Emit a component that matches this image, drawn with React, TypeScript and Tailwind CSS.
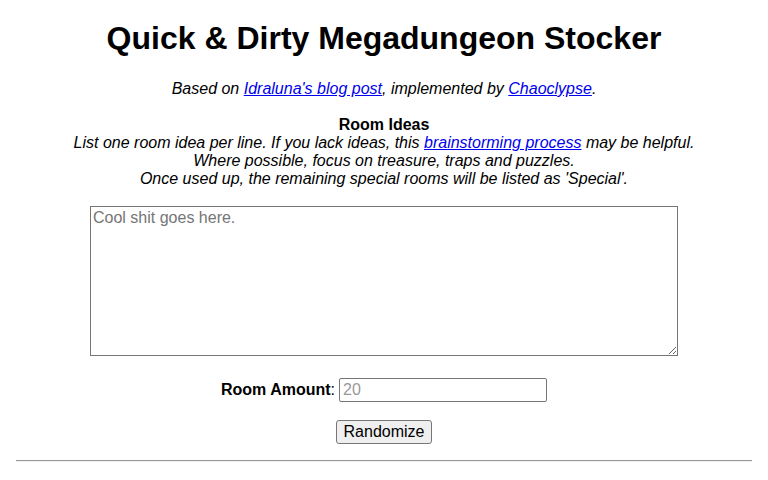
import React from "react";

export default function App() {
  return (
    <div className="min-h-[480px] bg-white px-4 text-black" style={{ fontFamily: '"Liberation Sans", Arial, sans-serif' }}>
      <h1 className="pt-[20px] text-center text-[32px] font-bold leading-[37px]">Quick &amp; Dirty Megadungeon Stocker</h1>
      <p className="mt-[23px] text-center text-[16px] italic leading-[18px]">
        Based on <a href="#" className="text-[#0000ee] underline">Idraluna's blog post</a>, implemented by{" "}
        <a href="#" className="text-[#0000ee] underline">Chaoclypse</a>.
      </p>
      <div className="mt-[18px] text-center text-[16px] leading-[18px]">
        <div className="font-bold">Room Ideas</div>
        <div className="italic">
          List one room idea per line. If you lack ideas, this{" "}
          <a href="#" className="text-[#0000ee] underline">brainstorming process</a> may be helpful.
        </div>
        <div className="italic">Where possible, focus on treasure, traps and puzzles.</div>
        <div className="italic">Once used up, the remaining special rooms will be listed as 'Special'.</div>
      </div>
      <div className="mt-[18px] flex justify-center">
        <textarea
          placeholder="Cool shit goes here."
          className="h-[150px] w-[588px] resize border border-[#767676] px-[2px] py-[2px] text-[16px] leading-[18px] placeholder:text-[#757575]"
          style={{ fontFamily: '"Liberation Sans", Arial, sans-serif' }}
        />
      </div>
      <div className="mt-[22px] flex items-center justify-center text-[16px]">
        <span className="font-bold">Room Amount</span>
        <span>:</span>
        <input
          type="number"
          placeholder="20"
          className="ml-[4px] h-[24px] w-[208px] rounded-[2px] border border-[#767676] px-[3px] text-[16px] placeholder:text-[#999]"
          style={{ fontFamily: '"Liberation Sans", Arial, sans-serif' }}
        />
      </div>
      <div className="mt-[18px] flex justify-center">
        <button className="h-[24px] w-[96px] rounded-[3px] border border-[#767676] bg-[#efefef] text-[16px] leading-[20px]">
          Randomize
        </button>
      </div>
      <div className="mt-[16px] h-[2px] border-t border-t-[#9a9a9a] border-b border-b-[#eeeeee]" />
    </div>
  );
}
